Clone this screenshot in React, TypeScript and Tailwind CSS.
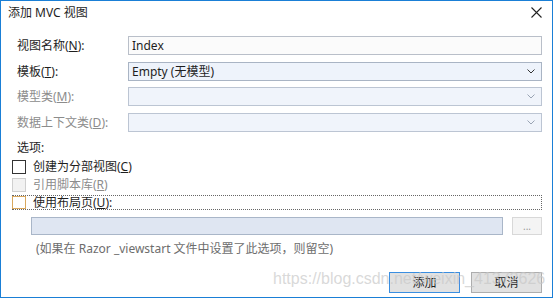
import React from "react";

const font = { fontFamily: '"Noto Sans", "Noto Sans CJK SC", sans-serif' };

function Chevron({ light }: { light?: boolean }) {
  return (
    <svg width="8" height="5" viewBox="0 0 8 5" className="shrink-0">
      <path d="M0.5 0.5 L4 4 L7.5 0.5" fill="none" stroke={light ? "#9aa4b4" : "#333"} strokeWidth="1" />
    </svg>
  );
}

function Row({ label, children, className }: { label: React.ReactNode; children: React.ReactNode; className?: string }) {
  return (
    <div className={"flex items-center h-[19px] " + (className || "")}>
      <div className="w-[111px] shrink-0">{label}</div>
      {children}
    </div>
  );
}

export default function App() {
  return (
    <div
      style={font}
      className="relative w-[553px] h-[298px] border border-[#1a7fd6] bg-white text-[12px] leading-none text-[#1e1e1e] flex flex-col overflow-hidden"
    >
      <div className="h-[23px] flex items-center justify-between pl-[7px] pr-[10px]">
        <span>添加 MVC 视图</span>
        <svg width="11" height="11" viewBox="0 0 11 11">
          <path d="M0.5 0.5 L10.5 10.5 M10.5 0.5 L0.5 10.5" stroke="#222" strokeWidth="1.1" />
        </svg>
      </div>

      <div className="flex flex-col pl-[16px] pr-[10px]">
        <Row label={<span>视图名称(<u>N</u>):</span>} className="mt-[12px]">
          <div className="flex-1 h-[19px] border border-[#b9bfc9] bg-[#fbfbfb] flex items-center pl-[3px]">Index</div>
        </Row>
        <Row label={<span>模板(<u>T</u>):</span>} className="mt-[7px]">
          <div className="flex-1 h-[19px] border border-[#a9b4c4] bg-[#eef3fb] flex items-center justify-between pl-[3px] pr-[6px]">
            <span>Empty (无模型)</span>
            <Chevron />
          </div>
        </Row>
        <Row label={<span className="text-[#8c8c8c]">模型类(<u>M</u>):</span>} className="mt-[6px]">
          <div className="flex-1 h-[19px] border border-[#bcc5d3] bg-[#f0f4fb] flex items-center justify-end pr-[6px]">
            <Chevron light />
          </div>
        </Row>
        <Row label={<span className="text-[#8c8c8c]">数据上下文类(<u>D</u>):</span>} className="mt-[7px]">
          <div className="flex-1 h-[19px] border border-[#bcc5d3] bg-[#f0f4fb] flex items-center justify-end pr-[6px]">
            <Chevron light />
          </div>
        </Row>
      </div>

      <div className="pl-[16px] mt-[10px] h-[12px] flex items-center">选项:</div>

      <div className="flex flex-col pl-[11px] pr-[10px] mt-[6px]">
        <div className="flex items-center h-[14px]">
          <div className="w-[14px] h-[14px] border border-[#333] bg-white" />
          <span className="ml-[7px]">创建为分部视图(<u>C</u>)</span>
        </div>
        <div className="flex items-center h-[14px] mt-[4px] text-[#8c8c8c]">
          <div className="w-[14px] h-[14px] border border-[#cfcfcf] bg-[#f2f2f2]" />
          <span className="ml-[7px]">引用脚本库(<u>R</u>)</span>
        </div>
        <div className="flex items-center h-[15px] mt-[3px] border border-dotted border-[#666]">
          <div className="w-[14px] h-[13px] border border-[#d9a85e] bg-white ml-[-1px]" />
          <span className="ml-[7px]">使用布局页(<u>U</u>):</span>
        </div>
      </div>

      <div className="flex items-center pl-[30px] pr-[10px] mt-[7px]">
        <div className="w-[472px] h-[18px] border border-[#a9b6c8] bg-[#dfe6f2]" />
        <div className="ml-[9px] flex-1 h-[18px] border border-[#d8d8d8] bg-[#f4f4f4] flex items-center justify-center text-[#9a9a9a] text-[10px]">...</div>
      </div>

      <div className="pl-[35px] mt-[8px] text-[#6d6d6d] h-[12px] flex items-center">
        (如果在 Razor _viewstart 文件中设置了此选项，则留空)
      </div>

      <div className="flex justify-end pr-[10px] mt-[17px] gap-[11px]">
        <div className="w-[71px] h-[21px] border border-[#3a8ee0] bg-[#e1e1e1] flex items-center justify-center">添加</div>
        <div className="w-[71px] h-[21px] border border-[#adadad] bg-[#e1e1e1] flex items-center justify-center">取消</div>
      </div>

      <div
        className="absolute left-[272px] top-[270px] text-[16px] leading-none text-[#c8c8c8]/70 whitespace-nowrap pointer-events-none"
        style={{ fontFamily: '"Liberation Sans", sans-serif' }}
      >
        https://blog.csdn.net/weixin_41372626
      </div>
    </div>
  );
}
